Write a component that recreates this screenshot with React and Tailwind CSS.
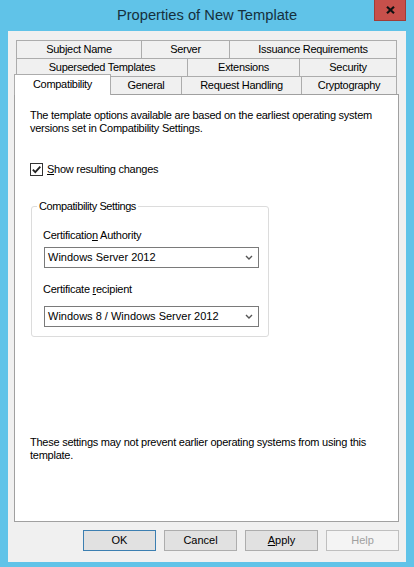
import React from 'react'

// tab rows above the selected one
const topRows = [
  [
    { label: 'Subject Name', w: 'w-[125px]' },
    { label: 'Server', w: 'w-[88px]' },
    { label: 'Issuance Requirements', w: 'w-[168px]' },
  ],
  [
    { label: 'Superseded Templates', w: 'w-[171px]' },
    { label: 'Extensions', w: 'w-[112px]' },
    { label: 'Security', w: 'w-[98px]' },
  ],
]

function Tab({ label, w, last }) {
  return (
    <div
      className={`${w} h-full flex items-center justify-center border-l border-t border-[#acacac] ${last ? 'border-r' : ''}`}
    >
      {label}
    </div>
  )
}

function Chevron() {
  return (
    <svg width="8" height="5" viewBox="0 0 8 5" className="shrink-0">
      <path d="M1 1 L4 4 L7 1" fill="none" stroke="#555" strokeWidth="1.4" />
    </svg>
  )
}

function Select({ value }) {
  return (
    <div className="ml-[1px] w-[215px] h-[21px] border border-[#7a7a7a] bg-white flex items-center justify-between pl-[3px] pr-[5px] tracking-normal">
      <span>{value}</span>
      <Chevron />
    </div>
  )
}

function Button({ children, variant }) {
  const styles = {
    default: 'bg-[#e1e1e1] border-[#3c7fb1] text-black',
    normal: 'bg-[#e1e1e1] border-[#adadad] text-black',
    disabled: 'bg-[#f4f4f4] border-[#bfbfbf] text-[#a0a0a0]',
  }
  return (
    <button className={`w-[73px] h-[21px] border flex items-center justify-center ${styles[variant]}`}>
      {children}
    </button>
  )
}

export default function App() {
  return (
    <div className="w-[414px] h-[567px] bg-[#60c3e8] relative font-['Liberation_Sans',Arial,sans-serif] text-[11px] leading-[13px] tracking-[-0.3px] text-black overflow-hidden whitespace-nowrap">
      {/* Title bar */}
      <div className="h-[31px] flex items-center justify-center">
        <span className="text-[14.7px] leading-none tracking-normal text-[#15303d] -mt-[1px]">Properties of New Template</span>
      </div>
      <button className="absolute top-0 right-[8px] w-[32px] h-[21px] bg-[#c7504b] border border-[#a13c37] border-t-0 flex items-center justify-center">
        <svg width="9" height="8" viewBox="0 0 9 8">
          <path d="M1 0.8 L8 7.2 M8 0.8 L1 7.2" stroke="#111" strokeWidth="2.2" />
        </svg>
      </button>

      {/* Client area */}
      <div className="mx-[8px] h-[531px] bg-[#f0f0f0] pt-[9px] pl-[6px] pr-[7px]">
        {topRows.map((row, i) => (
          <div key={i} className="mx-[2px] h-[18px] flex">
            {row.map((t, j) => (
              <Tab key={t.label} label={t.label} w={t.w} last={j === row.length - 1} />
            ))}
          </div>
        ))}
        <div className="h-[18px] flex">
          <div className="relative z-10 w-[97px] h-[21px] -mt-[2px] bg-white border-l border-t border-r border-[#acacac] flex items-center justify-center pb-[1px]">
            Compatibility
          </div>
          <div className="w-[70px] h-full flex items-center justify-center border-t border-[#acacac]">General</div>
          <div className="w-[120px] h-full flex items-center justify-center border-t border-l border-[#acacac]">Request Handling</div>
          <div className="w-[96px] h-full flex items-center justify-center border-t border-l border-r border-[#acacac]">Cryptography</div>
        </div>

        {/* Page */}
        <div className="h-[428px] border border-[#a0a0a0] bg-white px-[15px] pt-[14px] tracking-[-0.25px]">
          <p>
            The template options available are based on the earliest operating system
            <br />
            versions set in Compatibility Settings.
          </p>

          <label className="mt-[28px] h-[13px] flex items-center gap-[4px]">
            <span className="w-[13px] h-[13px] border border-[#333] bg-white flex items-center justify-center">
              <svg width="11" height="11" viewBox="0 0 11 11">
                <path d="M1.8 5.6 L4.3 8.2 L9.3 2.6" fill="none" stroke="#222" strokeWidth="1.8" />
              </svg>
            </span>
            <span>
              <span className="underline">S</span>how resulting changes
            </span>
          </label>

          <fieldset className="mt-[24px] ml-[1px] w-[238px] border border-[#dcdcdc] rounded-[3px] pl-[5px] pb-[9px]">
            <legend className="px-[2px] leading-[13px] tracking-[-0.4px]">Compatibility Settings</legend>
            <div className="pl-[6px] pt-[16px]">
              <div>
                Certificatio<span className="underline">n</span> Authority
              </div>
              <div className="mt-[5px]">
                <Select value="Windows Server 2012" />
              </div>
              <div className="mt-[15px]">
                Certificate <span className="underline">r</span>ecipient
              </div>
              <div className="mt-[10px]">
                <Select value="Windows 8 / Windows Server 2012" />
              </div>
            </div>
          </fieldset>

          <p className="mt-[99px]">
            These settings may not prevent earlier operating systems from using this
            <br />
            template.
          </p>
        </div>

        {/* Buttons */}
        <div className="mt-[8px] flex justify-end gap-[8px] tracking-normal">
          <Button variant="default">OK</Button>
          <Button variant="normal">Cancel</Button>
          <Button variant="normal">
            <span>
              <span className="underline">A</span>pply
            </span>
          </Button>
          <Button variant="disabled">Help</Button>
        </div>
      </div>
    </div>
  )
}
